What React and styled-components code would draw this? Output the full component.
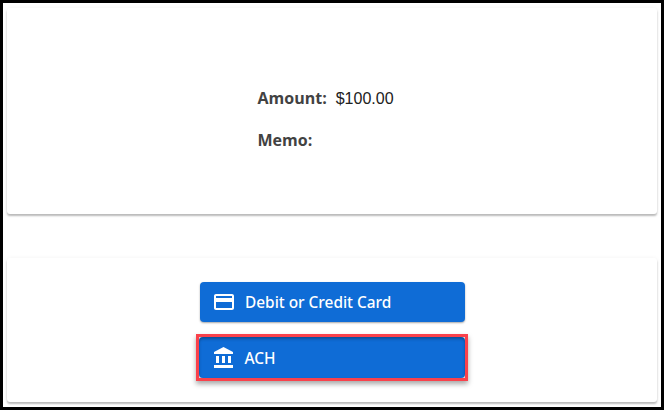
import React from "react";
import styled, { createGlobalStyle } from "styled-components";

const Global = createGlobalStyle`
  html, body { margin: 0; padding: 0; background: #000; }
  #root { width: 664px; height: 410px; }
`;

const Frame = styled.div`
  box-sizing: border-box;
  width: 664px;
  height: 410px;
  border: 3px solid #000;
  background: #fff;
  padding: 5px 4px;
  display: flex;
  flex-direction: column;
  font-family: "Noto Sans", sans-serif;
`;

const Card = styled.section`
  background: #fff;
  border-radius: 3px;
  box-shadow: 0 2px 2px rgba(0, 0, 0, 0.26), 0 0 4px rgba(0, 0, 0, 0.05);
`;

const InfoCard = styled(Card)`
  height: 206px;
  box-sizing: border-box;
  padding: 79px 0 0 250.5px;
  display: flex;
  flex-direction: column;
  gap: 20px;
`;

const InfoRow = styled.div`
  display: flex;
  align-items: baseline;
  gap: 9px;
  height: 22px;
  line-height: 22px;
`;

const Label = styled.span`
  font: 700 16px/22px "Open Sans", sans-serif;
  color: #424242;
`;

const Value = styled.span`
  font: 400 16px/22px "Liberation Sans", sans-serif;
  color: #212121;
`;

const ButtonCard = styled(Card)`
  margin-top: 44px;
  height: 144px;
  box-sizing: border-box;
  padding-top: 24px;
  display: flex;
  flex-direction: column;
  align-items: center;
  gap: 12px;
`;

const PayButton = styled.button`
  box-sizing: border-box;
  width: ${p => (p.$focused ? "266px" : "265px")};
  height: ${p => (p.$focused ? "41px" : "40px")};
  margin-left: ${p => (p.$focused ? "0" : "1px")};
  border: 0;
  border-radius: 4px;
  background: #0f6cd6;
  color: #fff;
  display: flex;
  align-items: center;
  gap: ${p => (p.$focused ? "8.5px" : "9px")};
  padding: ${p => (p.$focused ? "1px 0 0 13px" : "0 0 0 12px")};
  font: 500 15.4px "Noto Sans", sans-serif;
  box-shadow: ${p => (p.$focused
    ? "inset 0 2px 3px rgba(0,0,0,0.3)"
    : "0 1px 2px rgba(0,0,0,0.35)")};
`;

const FocusRing = styled.div`
  box-sizing: border-box;
  width: 272px;
  height: 47px;
  border: 3px solid #f9414b;
  background: #d8d8d8;
  box-shadow: 0 3px 5px rgba(0, 0, 0, 0.35);
`;

const Icon = styled.svg`
  width: 24px;
  height: 24px;
  fill: #fff;
  flex: none;
`;

export default function App() {
  return (
    <>
      <Global />
      <Frame>
        <InfoCard>
          <InfoRow>
            <Label>Amount:</Label>
            <Value>$100.00</Value>
          </InfoRow>
          <InfoRow>
            <Label>Memo:</Label>
          </InfoRow>
        </InfoCard>
        <ButtonCard>
          <PayButton>
            <Icon viewBox="0 0 24 24">
              <path d="M20 4H4c-1.11 0-1.99.89-1.99 2L2 18c0 1.11.89 2 2 2h16c1.11 0 2-.89 2-2V6c0-1.11-.89-2-2-2zm0 14H4v-6h16v6zm0-10H4V6h16v2z" />
            </Icon>
            Debit or Credit Card
          </PayButton>
          <FocusRing>
            <PayButton $focused>
              <Icon viewBox="0 0 24 24">
                <path d="M4 10v7h3v-7H4zm6 0v7h3v-7h-3zM2 22h19v-3H2v3zm14-12v7h3v-7h-3zm-4.5-9L2 6v2h19V6l-9.5-5z" />
              </Icon>
              ACH
            </PayButton>
          </FocusRing>
        </ButtonCard>
      </Frame>
    </>
  );
}
